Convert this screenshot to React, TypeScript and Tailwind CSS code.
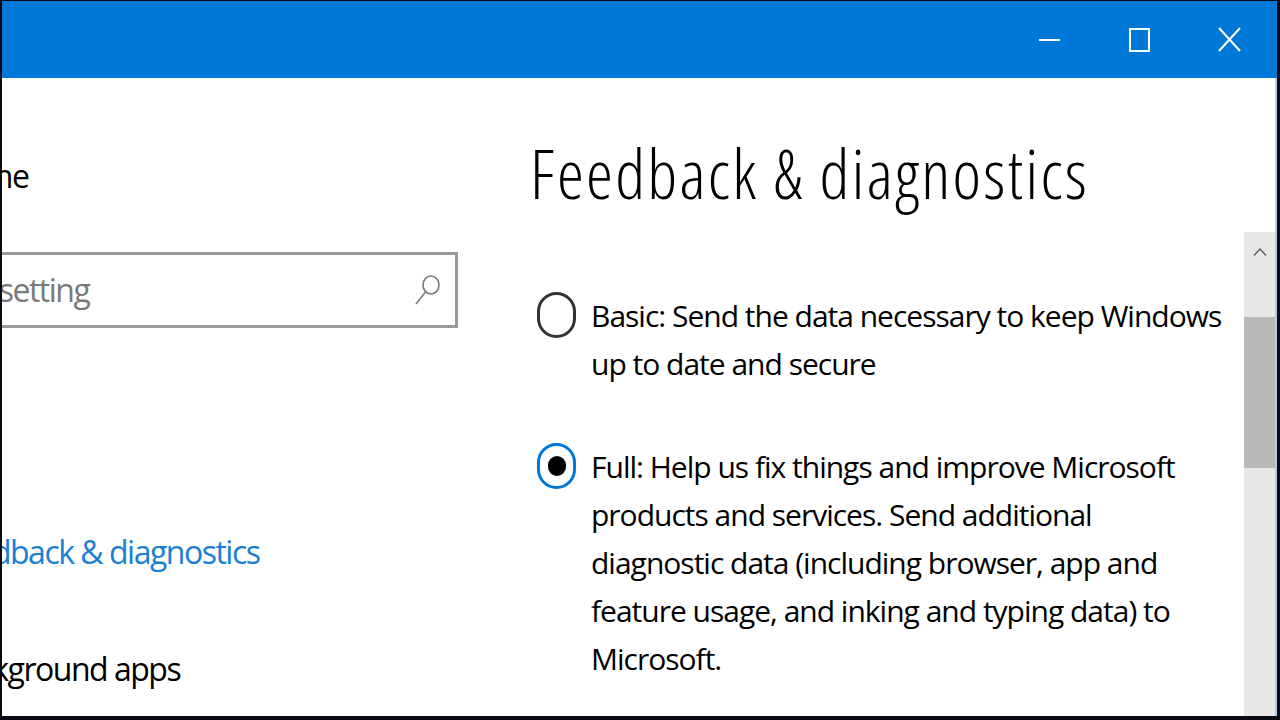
const font = "font-['Open_Sans','Noto_Sans',sans-serif]";

function TitleBar() {
  return (
    <div className="h-[77px] bg-[#0078d7] flex justify-end pr-[3px] shrink-0">
      <div className="w-[90px] h-full flex items-center justify-center">
        <div className="w-[21px] h-[2px] bg-white" />
      </div>
      <div className="w-[90px] h-full flex items-center justify-center">
        <div className="w-[21px] h-[24px] border-2 border-white" />
      </div>
      <div className="w-[90px] h-full flex items-center justify-center">
        <svg width="23" height="25" viewBox="0 0 23 25" fill="none" stroke="white" strokeWidth="2">
          <path d="M1 1 L22 24 M22 1 L1 24" />
        </svg>
      </div>
    </div>
  );
}

function SearchIcon() {
  return (
    <svg width="28" height="32" viewBox="0 0 28 32" fill="none" stroke="#7a7a7a" strokeWidth="1.6">
      <ellipse cx="17" cy="11" rx="8" ry="9" />
      <path d="M11.5 18 L2 30" />
    </svg>
  );
}

function NavPane() {
  return (
    <div className={`w-[470px] shrink-0 overflow-hidden ${font}`}>
      <div className="ml-[-100px] w-[556px] pt-[78px] text-[32px] leading-[40px] tracking-[-1.5px]">
        <div className="pl-[42px] text-black whitespace-nowrap">Home</div>
        <div className="mt-[56px] h-[76px] border-[3px] border-[#999999] flex items-center justify-between pl-[6px] pr-[13px]">
          <span className="text-[#797979] whitespace-nowrap">Find a setting</span>
          <SearchIcon />
        </div>
        <div className="mt-[204px] pl-[42px] text-[#1a7fd4] whitespace-nowrap">Feedback &amp; diagnostics</div>
        <div className="mt-[77px] pl-[41px] text-black whitespace-nowrap">Background apps</div>
      </div>
    </div>
  );
}

function Radio({ checked }: { checked?: boolean }) {
  return (
    <div
      className={`mt-[4px] w-[39px] h-[46px] rounded-full border-[3px] shrink-0 flex items-center justify-center ${
        checked ? "border-[#0078d7]" : "border-[#333333]"
      }`}
    >
      {checked && <div className="w-[18px] h-[20px] rounded-full bg-black" />}
    </div>
  );
}

function Option({ lines, checked }: { lines: string[]; checked?: boolean }) {
  return (
    <div className="flex gap-[15px]">
      <Radio checked={checked} />
      <div className="mt-[4px] text-[30px] leading-[48px] tracking-[-1px] text-black min-w-0">
        {lines.map((l) => (
          <div key={l} className="whitespace-nowrap">
            {l}
          </div>
        ))}
      </div>
    </div>
  );
}

function Scrollbar() {
  return (
    <div className="w-[31px] shrink-0 bg-[#e8e8e8] flex flex-col">
      <div className="h-[40px] flex items-center justify-center">
        <svg width="14" height="8" viewBox="0 0 14 8" fill="none" stroke="#5a5a5a" strokeWidth="1.3">
          <path d="M1 7.5 L7 1 L13 7.5" />
        </svg>
      </div>
      <div className="mt-[45px] h-[151px] bg-[#b8b8b8]" />
    </div>
  );
}

function ContentPane() {
  return (
    <div className={`flex-1 flex flex-col min-w-0 ${font}`}>
      <div className="h-[154px] shrink-0 pt-[61px] pl-[58px]">
        <h1 className="text-[68px] leading-[68px] font-light [font-stretch:75%] tracking-[2.3px] text-black whitespace-nowrap">
          Feedback &amp; diagnostics
        </h1>
      </div>
      <div className="flex-1 flex min-h-0">
        <div className="flex-1 min-w-0 overflow-hidden pt-[56px] pl-[65px] flex flex-col gap-[51px]">
          <Option lines={["Basic: Send the data necessary to keep Windows", "up to date and secure"]} />
          <Option
            checked
            lines={[
              "Full: Help us fix things and improve Microsoft",
              "products and services. Send additional",
              "diagnostic data (including browser, app and",
              "feature usage, and inking and typing data) to",
              "Microsoft.",
            ]}
          />
        </div>
        <Scrollbar />
      </div>
    </div>
  );
}

export default function App() {
  return (
    <div className="w-[1280px] h-[720px] bg-[#0a0a12] pl-[2px] pt-px pr-[3px] pb-[4px] flex flex-col overflow-hidden">
      <TitleBar />
      <div className="flex-1 flex bg-white border-r-2 border-[#a9cfef] min-h-0 overflow-hidden">
        <NavPane />
        <ContentPane />
      </div>
    </div>
  );
}
